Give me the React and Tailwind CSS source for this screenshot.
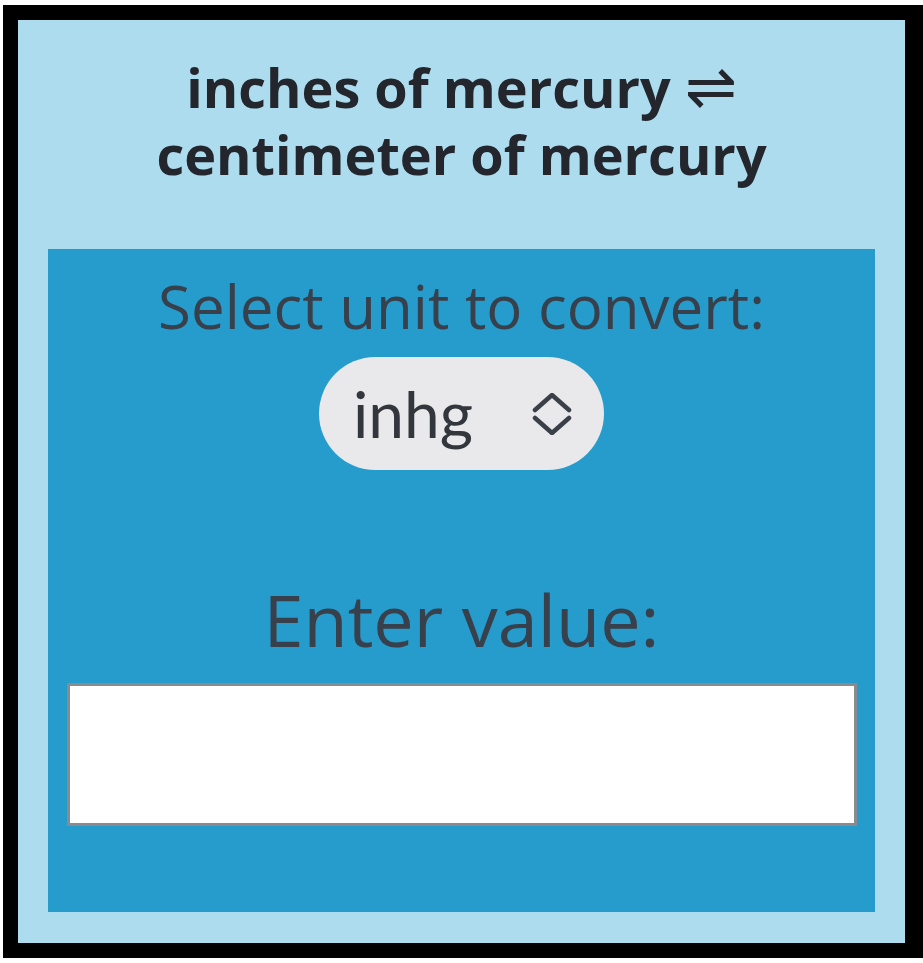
import { useState } from 'react';

function UpDownIcon() {
  return (
    <svg width="40" height="42" viewBox="0 0 40 42" fill="none" stroke="#3a3f48" strokeWidth="4.5" strokeLinecap="round" strokeLinejoin="round">
      <path d="M3 17 L20 2 L37 17" />
      <path d="M3 25 L20 40 L37 25" />
    </svg>
  );
}

export default function App() {
  const [unit, setUnit] = useState('inhg');
  const [value, setValue] = useState('');

  return (
    <div className="h-[963px] w-[923px] bg-white pl-[3px] pt-[5px] font-['Open_Sans',sans-serif]">
      <div className="h-[953px] w-[920px] border-[15px] border-r-[18px] border-black bg-[#addcef]">
        <h1 className="pt-[34px] text-center text-[54px] font-bold leading-[67px] text-[#23262d]">
          inches of mercury{' '}
          <span className="font-['DejaVu_Sans',sans-serif] text-[62px] font-extralight leading-none">⇌</span>
          <br />
          centimeter of mercury
        </h1>

        <section className="mx-[30px] mt-[61px] flex h-[663px] flex-col items-center bg-[#269ccc] pt-[27px]">
          <p className="text-[60px] leading-[60px] text-[#38404b]">Select unit to convert:</p>

          <label className="relative mt-[21px] flex h-[113px] w-[285px] items-center rounded-full bg-[#e9e9ec] pl-[34px]">
            <select
              value={unit}
              onChange={(event) => setUnit(event.target.value)}
              className="absolute inset-0 cursor-pointer opacity-0"
            >
              <option value="inhg">inhg</option>
              <option value="cmhg">cmhg</option>
            </select>
            <span className="font-['Lato',sans-serif] text-[64px] leading-none text-[#33363c]">{unit}</span>
            <span className="ml-auto mr-[32px] flex">
              <UpDownIcon />
            </span>
          </label>

          <p className="mt-[109px] text-[72px] leading-[80px] text-[#38404b]">Enter value:</p>

          <input
            value={value}
            onChange={(event) => setValue(event.target.value)}
            className="mt-[24px] h-[143px] w-[790px] border-[3px] border-[#8b8b8f] bg-white px-4 text-[40px] outline-none"
          />
        </section>
      </div>
    </div>
  );
}
